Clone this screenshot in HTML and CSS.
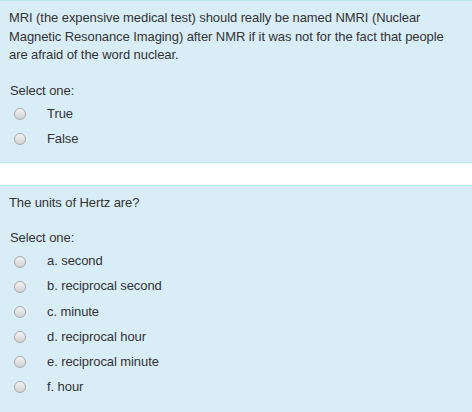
FILE: index.html
```html
<!DOCTYPE html>
<html lang="en">
<head>
  <meta charset="UTF-8" />
  <title>Quiz</title>
  <link rel="stylesheet" href="styles.css">
</head>
<body>
  <div class="que">
    <div class="qtext">MRI (the expensive medical test) should really be named NMRI (Nuclear Magnetic Resonance Imaging) after NMR if it was not for the fact that people are afraid of the word nuclear.</div>
    <div class="prompt">Select one:</div>
    <div class="answer">
      <label class="opt"><input type="radio" name="q1"> <span>True</span></label>
      <label class="opt"><input type="radio" name="q1"> <span>False</span></label>
    </div>
  </div>

  <div class="que">
    <div class="qtext">The units of Hertz are?</div>
    <div class="prompt">Select one:</div>
    <div class="answer">
      <label class="opt"><input type="radio" name="q2"> <span>a. second</span></label>
      <label class="opt"><input type="radio" name="q2"> <span>b. reciprocal second</span></label>
      <label class="opt"><input type="radio" name="q2"> <span>c. minute</span></label>
      <label class="opt"><input type="radio" name="q2"> <span>d. reciprocal hour</span></label>
      <label class="opt"><input type="radio" name="q2"> <span>e. reciprocal minute</span></label>
      <label class="opt"><input type="radio" name="q2"> <span>f. hour</span></label>
    </div>
  </div>
</body>
</html>
```

FILE: styles.css
```css
html, body {
  margin: 0;
  padding: 0;
  background: #ffffff;
}

body {
  font-family: 'Liberation Sans', Arial, sans-serif;
  font-size: 13px;
  line-height: 18.6px;
  color: #333333;
  letter-spacing: -0.08px;
}

/* Question box, like the info alert */
.que {
  background: #d9edf7;
  border-top: 1px solid #bce8f1;
  border-bottom: 1px solid #bce8f1;
  padding: 8px 9px 10px 9px;
  margin-bottom: 22px;
}

/* last box runs on past the bottom of the window */
.que:last-child {
  padding-bottom: 20px;
}

.qtext {
  margin-bottom: 17px;
}

.prompt {
  padding-left: 1px;
  margin-bottom: 1px;
}

.opt {
  display: flex;
  align-items: center;
  height: 25.2px;
  cursor: pointer;
}

/* Grey gradient radio button */
.opt input {
  appearance: none;
  -webkit-appearance: none;
  width: 12px;
  height: 12px;
  margin: 0 0 0 5px;
  border: 1px solid #a9a9a9;
  border-radius: 50%;
  background: linear-gradient(180deg, #f3f3f3, #d2d2d2);
  box-sizing: border-box;
}

.opt span {
  margin-left: 21px;
}
```
